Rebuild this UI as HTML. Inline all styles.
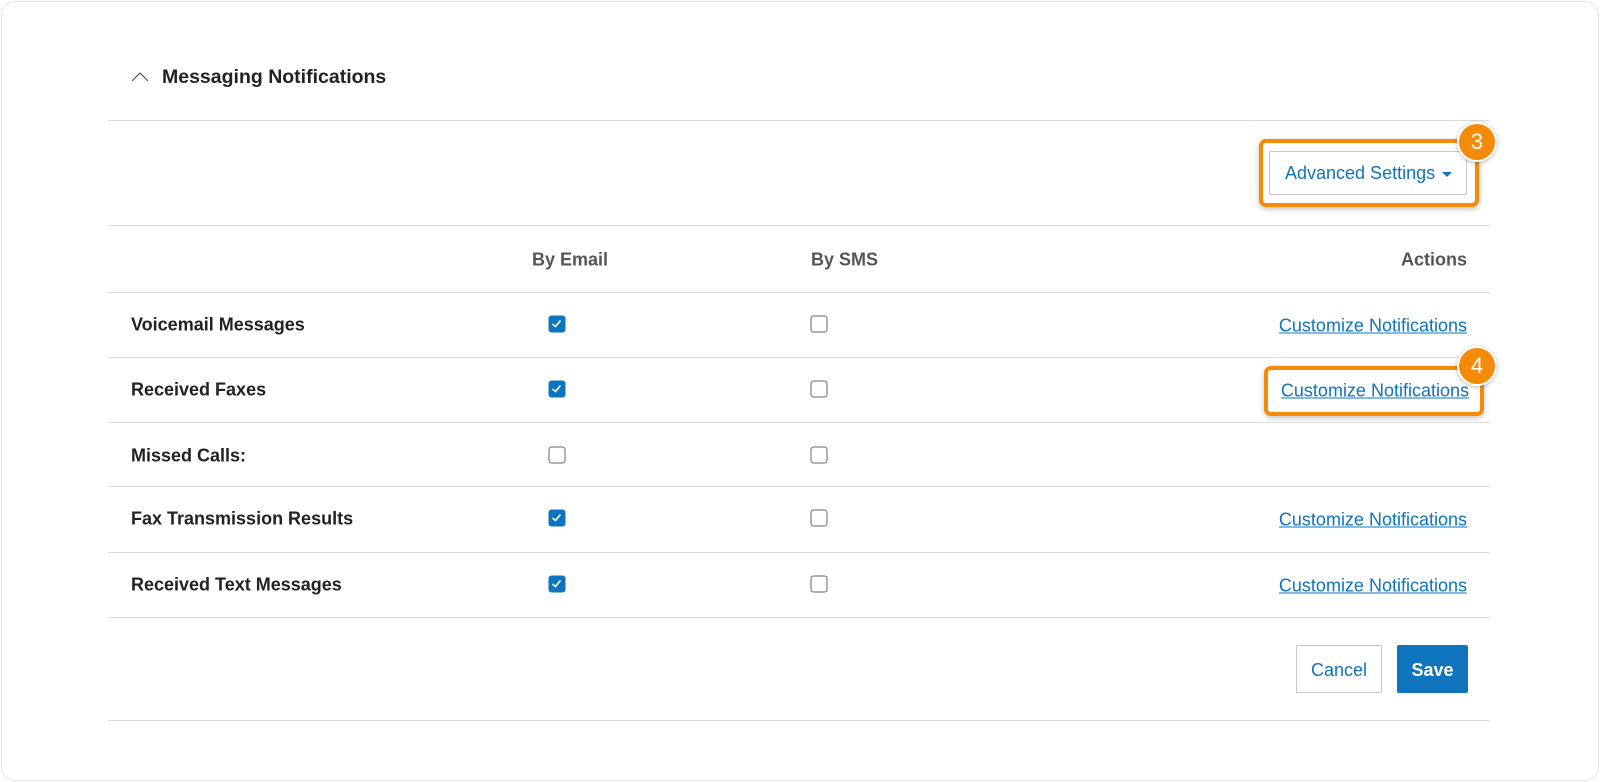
<!DOCTYPE html>
<html><head><style>
*{box-sizing:border-box;margin:0;padding:0}
body{width:1600px;height:782px;background:#fff;font-family:"Liberation Sans",Arial,sans-serif;position:relative;overflow:hidden}
.card{position:absolute;left:1px;top:1px;width:1598px;height:780px;border:1px solid #e6e6e6;border-radius:14px}
.a{position:absolute}
.line{position:absolute;left:108px;width:1382px;height:1px;background:#dcdcdc}
.lbl{position:absolute;left:131px;font-weight:bold;font-size:18px;color:#222;transform:translateY(-50%)}
.th{position:absolute;top:260px;font-weight:bold;font-size:18px;color:#555;transform:translateY(-50%)}
.cb{position:absolute;width:17px;height:17px;border-radius:3px;border:1.5px solid #666;background:#fff;transform:translate(-50%,-50%)}
.cb.on{background:#0e74bd;border-color:#0e74bd}
.link{position:absolute;right:133px;font-size:18px;color:#0e74bd;text-decoration:underline;transform:translateY(-50%)}
.badge{position:absolute;width:40px;height:40px;border-radius:50%;background:#f58a07;border:2px solid #fff;color:#fff;font-size:22px;text-align:center;line-height:36px;box-shadow:0 1px 4px rgba(0,0,0,.3)}
.hl{position:absolute;border:4px solid #f58a07;border-radius:7px;box-shadow:0 2px 6px rgba(0,0,0,.25)}
</style></head><body>
<div class="card"></div>
<svg class="a" style="left:131px;top:71px" width="18" height="12" viewBox="0 0 18 12"><path d="M1 10 L9 2 L17 10" fill="none" stroke="#444" stroke-width="1.1"/></svg>
<div class="a" style="left:162px;top:66px;font-size:19.5px;font-weight:bold;color:#222">Messaging Notifications</div>
<div class="line" style="top:120px"></div>
<div class="hl" style="left:1259px;top:139px;width:220px;height:68px"></div>
<div class="a" style="left:1269px;top:151px;width:198px;height:44px;border:1px solid #c8c8c8;border-radius:2px;background:#fff;color:#0e74bd;font-size:18px;line-height:42px;padding-left:15px;white-space:nowrap">Advanced Settings <span style="display:inline-block;width:0;height:0;border-left:5px solid transparent;border-right:5px solid transparent;border-top:5px solid #0e74bd;vertical-align:middle;margin-left:2px"></span></div>
<div class="badge" style="left:1457px;top:122px">3</div>
<div class="line" style="top:225px"></div>
<div class="th" style="left:532px">By Email</div>
<div class="th" style="left:811px">By SMS</div>
<div class="th" style="right:133px">Actions</div>
<div class="line" style="top:292px"></div>

<div class="lbl" style="top:325px">Voicemail Messages</div>
<div class="cb on" style="left:557px;top:324px"><svg width="14" height="14" viewBox="0 0 14 14" style="position:absolute;left:0;top:0"><path d="M3 7.5 L6 10 L11 4" fill="none" stroke="#fff" stroke-width="1.6"/></svg></div>
<div class="cb" style="left:819px;top:324px"></div>
<div class="link" style="top:326px">Customize Notifications</div>
<div class="line" style="top:357px"></div>

<div class="lbl" style="top:390px">Received Faxes</div>
<div class="cb on" style="left:557px;top:389px"><svg width="14" height="14" viewBox="0 0 14 14" style="position:absolute;left:0;top:0"><path d="M3 7.5 L6 10 L11 4" fill="none" stroke="#fff" stroke-width="1.6"/></svg></div>
<div class="cb" style="left:819px;top:389px"></div>
<div class="hl" style="left:1264px;top:366px;width:220px;height:50px"></div>
<div class="link" style="top:391px;right:131px">Customize Notifications</div>
<div class="badge" style="left:1457px;top:346px">4</div>
<div class="line" style="top:422px"></div>

<div class="lbl" style="top:456px">Missed Calls:</div>
<div class="cb" style="left:557px;top:455px"></div>
<div class="cb" style="left:819px;top:455px"></div>
<div class="line" style="top:486px"></div>

<div class="lbl" style="top:519px">Fax Transmission Results</div>
<div class="cb on" style="left:557px;top:518px"><svg width="14" height="14" viewBox="0 0 14 14" style="position:absolute;left:0;top:0"><path d="M3 7.5 L6 10 L11 4" fill="none" stroke="#fff" stroke-width="1.6"/></svg></div>
<div class="cb" style="left:819px;top:518px"></div>
<div class="link" style="top:520px">Customize Notifications</div>
<div class="line" style="top:552px"></div>

<div class="lbl" style="top:585px">Received Text Messages</div>
<div class="cb on" style="left:557px;top:584px"><svg width="14" height="14" viewBox="0 0 14 14" style="position:absolute;left:0;top:0"><path d="M3 7.5 L6 10 L11 4" fill="none" stroke="#fff" stroke-width="1.6"/></svg></div>
<div class="cb" style="left:819px;top:584px"></div>
<div class="link" style="top:586px">Customize Notifications</div>
<div class="line" style="top:617px"></div>

<div class="a" style="left:1296px;top:645px;width:86px;height:48px;border:1px solid #c8c8c8;border-radius:2px;color:#0e74bd;font-size:18px;line-height:48px;text-align:center">Cancel</div>
<div class="a" style="left:1397px;top:645px;width:71px;height:48px;background:#0e74bd;border-radius:2px;color:#fff;font-size:18px;font-weight:bold;line-height:50px;text-align:center">Save</div>
<div class="line" style="top:720px"></div>
</body></html>
